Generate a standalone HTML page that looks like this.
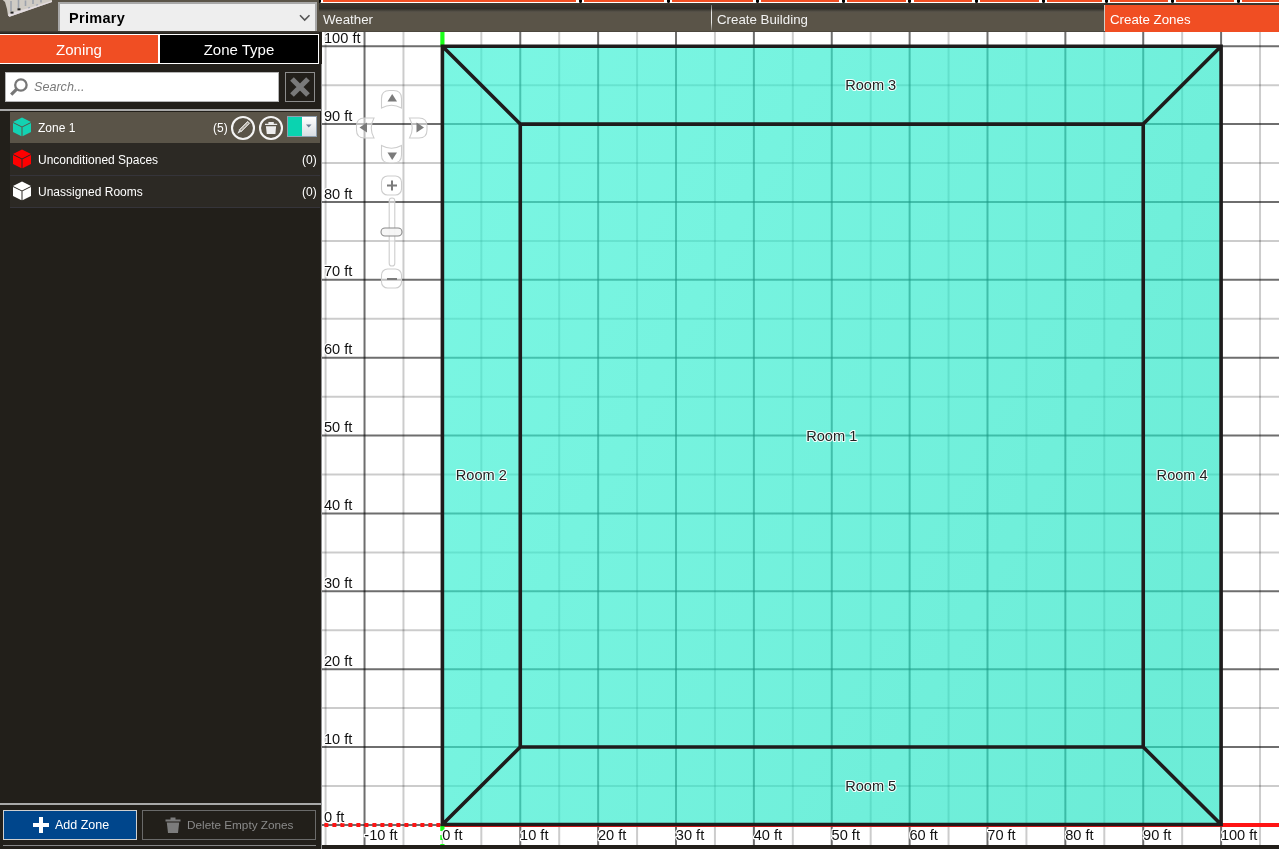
<!DOCTYPE html>
<html><head><meta charset="utf-8"><style>
*{margin:0;padding:0;box-sizing:border-box}
html,body{width:1279px;height:849px;overflow:hidden;background:#221f1a;font-family:"Liberation Sans", sans-serif}
.a{position:absolute}
.t{position:absolute;white-space:nowrap;line-height:1;will-change:transform}
svg{will-change:transform}
</style></head><body>
<!-- left header -->
<div class="a" style="left:0;top:0;width:319px;height:31px;background:#5a5448"></div>
<svg class="a" style="left:0;top:0" width="56" height="20" viewBox="0 0 56 20">
<polygon points="2.8,0 52,0 52,2 9.5,16.8 8,15.5 7,9 5,2" fill="#cfcbc4"/>
<polygon points="9.5,16.8 52,2 52,0.8 34,6.5 20,10.5 9,13.8 8,15.5" fill="#e4dde0"/>
<path d="M11 1V11 M18.5 0V8 M25.5 0.5V6 M33 0V4 M41 0V2.5" stroke="#8d96a4" stroke-width="1.6" opacity="0.75"/>
<rect x="10.5" y="11.6" width="3" height="2" fill="#222"/><rect x="17.5" y="8.3" width="3" height="2" fill="#222"/>
<path d="M28 8 L30 7.4 M36 5.2 L38 4.6" stroke="#a0a8b4" stroke-width="1.2"/>
</svg>
<div class="a" style="left:58px;top:2px;width:259px;height:29px;border:2px solid #a8a8a8;border-bottom:none;background:#eeeeee"></div>
<div class="t" style="left:69px;top:11px;font-size:14.5px;font-weight:bold;color:#000;letter-spacing:0.3px">Primary</div>
<svg class="a" style="left:298px;top:13px" width="14" height="10" viewBox="0 0 14 10"><path d="M2 2.3 L6.7 7 L11.5 2.3" stroke="#555" stroke-width="1.6" fill="none"/></svg>
<div class="a" style="left:0;top:31px;width:319px;height:3px;background:linear-gradient(#46423a,#221f1a)"></div>
<!-- tabs -->
<div class="a" style="left:0;top:34px;width:319px;height:30px;background:#fff"></div>
<div class="a" style="left:0;top:35px;width:158px;height:28px;background:#f04e23"></div>
<div class="a" style="left:160px;top:35px;width:158px;height:28px;background:#000"></div>
<div class="t" style="left:0;width:158px;text-align:center;top:42px;font-size:15px;color:#fff">Zoning</div>
<div class="t" style="left:160px;width:158px;text-align:center;top:42px;font-size:15px;color:#fff">Zone Type</div>
<!-- search -->
<div class="a" style="left:5px;top:72px;width:274px;height:30px;background:#fff;border:1px solid #b4b4b4"></div>
<svg class="a" style="left:9px;top:77px" width="21" height="20" viewBox="0 0 21 20"><circle cx="11.9" cy="8" r="5.7" stroke="#777" stroke-width="2.3" fill="none"/><path d="M8.2 11.6 L2.2 17.6" stroke="#777" stroke-width="3.2" stroke-linecap="butt"/></svg>
<div class="t" style="left:34px;top:81px;font-size:12.6px;font-style:italic;color:#7a7a7a">Search...</div>
<div class="a" style="left:285px;top:72px;width:30px;height:30px;border:1px solid #8c8c8c;background:#221f1a"></div>
<svg class="a" style="left:285px;top:72px" width="30" height="30" viewBox="0 0 30 30"><path d="M7 7 L23 23 M23 7 L7 23" stroke="#7a7a7a" stroke-width="5.2"/></svg>
<div class="a" style="left:0;top:109px;width:321px;height:2px;background:#a9a9a9"></div>
<div class="a" style="left:321px;top:64px;width:1px;height:785px;background:#8f8f8f"></div>
<!-- rows -->
<div class="a" style="left:10px;top:112px;width:310px;height:31px;background:#5a5448"></div>
<div class="a" style="left:10px;top:143px;width:310px;height:32px;background:#2c2924"></div>
<div class="a" style="left:10px;top:175px;width:310px;height:1px;background:#35343a"></div>
<div class="a" style="left:10px;top:176px;width:310px;height:31px;background:#2c2924"></div>
<div class="a" style="left:10px;top:207px;width:310px;height:1px;background:#35343a"></div>
<svg style="position:absolute;left:13px;top:117px" width="19" height="20" viewBox="0 0 19 20"><polygon points="9,0.6 18,5 9,9.4 0,5" fill="#13d2b2"/><polygon points="0,5.9 8.5,10.2 8.5,19.3 0,14.9" fill="#13d2b2"/><polygon points="9.5,10.2 18,5.9 18,14.9 9.5,19.3" fill="#13d2b2"/></svg>
<svg style="position:absolute;left:13px;top:149px" width="19" height="20" viewBox="0 0 19 20"><polygon points="9,0.6 18,5 9,9.4 0,5" fill="#ff0000"/><polygon points="0,5.9 8.5,10.2 8.5,19.3 0,14.9" fill="#ff0000"/><polygon points="9.5,10.2 18,5.9 18,14.9 9.5,19.3" fill="#ff0000"/></svg>
<svg style="position:absolute;left:13px;top:181px" width="19" height="20" viewBox="0 0 19 20"><polygon points="9,0.6 18,5 9,9.4 0,5" fill="#ffffff"/><polygon points="0,5.9 8.5,10.2 8.5,19.3 0,14.9" fill="#ffffff"/><polygon points="9.5,10.2 18,5.9 18,14.9 9.5,19.3" fill="#ffffff"/></svg>
<div class="t" style="left:38px;top:122px;font-size:12px;color:#fff">Zone 1</div>
<div class="t" style="left:38px;top:154px;font-size:12px;color:#fff">Unconditioned Spaces</div>
<div class="t" style="left:38px;top:186px;font-size:12px;color:#fff">Unassigned Rooms</div>
<div class="t" style="left:213px;top:122px;font-size:12px;color:#fff">(5)</div>
<div class="t" style="left:302px;top:154px;font-size:12px;color:#fff">(0)</div>
<div class="t" style="left:302px;top:186px;font-size:12px;color:#fff">(0)</div>
<svg class="a" style="left:230px;top:115px" width="56" height="27" viewBox="0 0 56 27">
<circle cx="13" cy="13" r="11" stroke="#f4f4f4" stroke-width="2.1" fill="none"/>
<g transform="rotate(-45 13 13)"><rect x="9" y="11.6" width="12" height="2.8" fill="#c8c4bc" stroke="#f0f0f0" stroke-width="0.7"/><path d="M9 11.6 L5 13 L9 14.4Z" fill="#e0e0e0"/><path d="M10.5 13H19.5" stroke="#6a655c" stroke-width="0.8" stroke-dasharray="1 1"/></g>
<circle cx="41" cy="13" r="11" stroke="#f4f4f4" stroke-width="2.1" fill="none"/>
<path d="M35 8.8 H47.2 V10 H35Z M38.4 7 H43.8 V8.8 H38.4Z M35.9 11.2 H46.1 L45.4 19.1 H36.8Z" fill="#ececec"/>
</svg>
<div class="a" style="left:287px;top:116px;width:30px;height:21px;border:1px solid #8fa0b0;background:linear-gradient(90deg,#0ad3b0 0,#0ad3b0 14px,#fff 14px)"></div>
<div class="a" style="left:302px;top:117px;width:14px;height:19px;background:linear-gradient(#fff,#d8dde2)"></div>
<svg class="a" style="left:304px;top:123px" width="10" height="6" viewBox="0 0 10 6"><path d="M2 1.5 H7.5 L4.75 4.6Z" fill="#6a7c94"/></svg>
<!-- bottom buttons -->
<div class="a" style="left:0;top:803px;width:321px;height:2px;background:#a9a9a9"></div>
<div class="a" style="left:3px;top:810px;width:134px;height:30px;border:1px solid #cfcfcf;background:#00468c"></div>
<svg class="a" style="left:33px;top:817px" width="16" height="16" viewBox="0 0 16 16"><path d="M6 0H10V6H16V10H10V16H6V10H0V6H6Z" fill="#fff"/></svg>
<div class="t" style="left:55px;top:819px;font-size:12.5px;color:#fff">Add Zone</div>
<div class="a" style="left:142px;top:810px;width:174px;height:30px;border:1px solid #6a6a6a"></div>
<svg class="a" style="left:164px;top:816px" width="18" height="18" viewBox="0 0 18 18"><path d="M1.5 3.5H16.5V5.5H1.5Z M6.5 1.5H11.5V3.5H6.5Z M2.8 6.5H15.2L14 17H4Z" fill="#7c7c7c"/></svg>
<div class="t" style="left:187px;top:819px;font-size:11.75px;color:#8a8a8a">Delete Empty Zones</div>
<div class="a" style="left:3px;top:845px;width:313px;height:1px;background:#858585"></div>
<!-- top bar -->
<div class="a" style="left:319px;top:3px;width:960px;height:29px;background:linear-gradient(#3e3b34 0,#35322c 2px,#302d28 5.5px,#3c3932 6.8px,#4e4a41 8px,#58534a 9px,#5a5448 10px,#5a5448 27.5px,#4c473e 28.5px)"></div>
<div style="position:absolute;left:319px;top:0;width:960px;height:2px;background:#f04e23"></div><div style="position:absolute;left:319px;top:2px;width:960px;height:1px;background:#fff"></div><div style="position:absolute;left:319px;top:0;width:4px;height:2px;background:#fff"></div><div style="position:absolute;left:318.75px;top:0;width:2.25px;height:2.5px;background:#000;border-radius:0 0 1.5px 0"></div><div style="position:absolute;left:576.0px;top:0;width:8px;height:2px;background:#fff"></div><div style="position:absolute;left:578.5px;top:0;width:3px;height:2.5px;background:#000;border-radius:0 0 1.5px 1.5px"></div><div style="position:absolute;left:664.0px;top:0;width:8px;height:2px;background:#fff"></div><div style="position:absolute;left:666.5px;top:0;width:3px;height:2.5px;background:#000;border-radius:0 0 1.5px 1.5px"></div><div style="position:absolute;left:753.0px;top:0;width:8px;height:2px;background:#fff"></div><div style="position:absolute;left:755.5px;top:0;width:3px;height:2.5px;background:#000;border-radius:0 0 1.5px 1.5px"></div><div style="position:absolute;left:839.0px;top:0;width:8px;height:2px;background:#fff"></div><div style="position:absolute;left:841.5px;top:0;width:3px;height:2.5px;background:#000;border-radius:0 0 1.5px 1.5px"></div><div style="position:absolute;left:905.5px;top:0;width:8px;height:2px;background:#fff"></div><div style="position:absolute;left:908.0px;top:0;width:3px;height:2.5px;background:#000;border-radius:0 0 1.5px 1.5px"></div><div style="position:absolute;left:972.0px;top:0;width:8px;height:2px;background:#fff"></div><div style="position:absolute;left:974.5px;top:0;width:3px;height:2.5px;background:#000;border-radius:0 0 1.5px 1.5px"></div><div style="position:absolute;left:1039.0px;top:0;width:8px;height:2px;background:#fff"></div><div style="position:absolute;left:1041.5px;top:0;width:3px;height:2.5px;background:#000;border-radius:0 0 1.5px 1.5px"></div><div style="position:absolute;left:1102.0px;top:0;width:8px;height:2px;background:#fff"></div><div style="position:absolute;left:1104.5px;top:0;width:3px;height:2.5px;background:#000;border-radius:0 0 1.5px 1.5px"></div><div style="position:absolute;left:1168.0px;top:0;width:8px;height:2px;background:#fff"></div><div style="position:absolute;left:1170.5px;top:0;width:3px;height:2.5px;background:#000;border-radius:0 0 1.5px 1.5px"></div><div style="position:absolute;left:1234.0px;top:0;width:8px;height:2px;background:#fff"></div><div style="position:absolute;left:1236.5px;top:0;width:3px;height:2.5px;background:#000;border-radius:0 0 1.5px 1.5px"></div>
<div class="a" style="left:1105px;top:5px;width:174px;height:27px;background:#f04e23"></div>
<div class="a" style="left:711px;top:5px;width:1px;height:25px;background:linear-gradient(rgba(255,255,255,0.3),rgba(255,255,255,0.85) 30%,rgba(255,255,255,0.85) 70%,rgba(255,255,255,0.2))"></div>
<div class="a" style="left:1104px;top:5px;width:1px;height:26px;background:#d0ccc4"></div>
<div class="t" style="left:323px;top:12.5px;font-size:13.3px;color:#f2f2f2">Weather</div>
<div class="t" style="left:717px;top:12.5px;font-size:13.3px;color:#f2f2f2">Create Building</div>
<div class="t" style="left:1110px;top:12.5px;font-size:13.3px;color:#fff">Create Zones</div>
<!-- map -->
<svg style="position:absolute;left:322px;top:32px" width="957" height="813" viewBox="322 32 957 813"><rect x="322" y="32" width="957" height="813" fill="#ffffff"/><path d="M325.59 32V845 M403.46 32V845 M481.33 32V845 M559.20 32V845 M637.08 32V845 M714.94 32V845 M792.82 32V845 M870.68 32V845 M948.55 32V845 M1026.42 32V845 M1104.30 32V845 M1182.16 32V845 M1260.03 32V845" stroke="#000" stroke-opacity="0.2" stroke-width="2" fill="none"/><path d="M322 785.98H1279 M322 708.12H1279 M322 630.24H1279 M322 552.38H1279 M322 474.50H1279 M322 396.63H1279 M322 318.76H1279 M322 240.89H1279 M322 163.02H1279 M322 85.15H1279" stroke="#000" stroke-opacity="0.2" stroke-width="2" fill="none"/><path d="M364.53 32V845 M520.27 32V845 M598.14 32V845 M676.01 32V845 M753.88 32V845 M831.75 32V845 M909.62 32V845 M987.49 32V845 M1065.36 32V845 M1143.23 32V845 M1221.10 32V845" stroke="#000" stroke-opacity="0.57" stroke-width="2" fill="none"/><path d="M322 824.92H1279 M322 747.05H1279 M322 669.18H1279 M322 591.31H1279 M322 513.44H1279 M322 435.57H1279 M322 357.70H1279 M322 279.83H1279 M322 201.96H1279 M322 124.09H1279 M322 46.22H1279" stroke="#000" stroke-opacity="0.57" stroke-width="2" fill="none"/><path d="M442.40 824.92V845" stroke="#c8c8c8" stroke-width="1.4"/><path d="M442.40 824.92H1279" stroke="#ff1414" stroke-width="4"/><path d="M442.40 824.92H322" stroke="#ff1414" stroke-width="4" stroke-dasharray="4 4" stroke-dashoffset="6"/><path d="M442.40 46.22V32" stroke="#19ff19" stroke-width="4.2"/><path d="M442.40 825.92V845" stroke="#19ff19" stroke-width="4.2" stroke-dasharray="5 4"/><defs><linearGradient id="tg" gradientUnits="userSpaceOnUse" x1="442" y1="200" x2="1221" y2="600"><stop offset="0" stop-color="#33f1d3"/><stop offset="1" stop-color="#1ee3c2"/></linearGradient></defs><polygon points="520.27,747.05 1143.23,747.05 1143.23,124.09 520.27,124.09" fill="url(#tg)" fill-opacity="0.65"/><polygon points="442.40,824.92 520.27,747.05 520.27,124.09 442.40,46.22" fill="url(#tg)" fill-opacity="0.65"/><polygon points="442.40,46.22 520.27,124.09 1143.23,124.09 1221.10,46.22" fill="url(#tg)" fill-opacity="0.65"/><polygon points="1221.10,46.22 1143.23,124.09 1143.23,747.05 1221.10,824.92" fill="url(#tg)" fill-opacity="0.65"/><polygon points="442.40,824.92 1221.10,824.92 1143.23,747.05 520.27,747.05" fill="url(#tg)" fill-opacity="0.65"/><path d="M442.40 824.52H1221.10V46.22H442.40Z M520.27 747.05H1143.23V124.09H520.27Z M442.40 824.52L520.27 747.05 M1221.10 824.52L1143.23 747.05 M442.40 46.22L520.27 124.09 M1221.10 46.22L1143.23 124.09" stroke="#1e1c1c" stroke-width="3.6" fill="none" stroke-linejoin="miter"/><g font-family='"Liberation Sans", sans-serif' font-size="14.6" fill="#111" stroke="#fff" stroke-width="2.4" stroke-linejoin="round" paint-order="stroke"><text x="324" y="821.52">0 ft</text><text x="324" y="743.65">10 ft</text><text x="324" y="665.78">20 ft</text><text x="324" y="587.91">30 ft</text><text x="324" y="510.04">40 ft</text><text x="324" y="432.17">50 ft</text><text x="324" y="354.30">60 ft</text><text x="324" y="276.43">70 ft</text><text x="324" y="198.56">80 ft</text><text x="324" y="120.69">90 ft</text><text x="324" y="42.82">100 ft</text><text x="364.33" y="840.4">-10 ft</text><text x="442.20" y="840.4">0 ft</text><text x="520.07" y="840.4">10 ft</text><text x="597.94" y="840.4">20 ft</text><text x="675.81" y="840.4">30 ft</text><text x="753.68" y="840.4">40 ft</text><text x="831.55" y="840.4">50 ft</text><text x="909.42" y="840.4">60 ft</text><text x="987.29" y="840.4">70 ft</text><text x="1065.16" y="840.4">80 ft</text><text x="1143.03" y="840.4">90 ft</text><text x="1220.90" y="840.4">100 ft</text></g><g font-family='"Liberation Sans", sans-serif' font-size="14.6" fill="#222" stroke="#ffffff" stroke-width="2.2" stroke-linejoin="round" paint-order="stroke" stroke-opacity="0.9"><text x="831.75" y="440.57" text-anchor="middle">Room 1</text><text x="481.33" y="479.50" text-anchor="middle">Room 2</text><text x="870.68" y="90.15" text-anchor="middle">Room 3</text><text x="1182.16" y="479.50" text-anchor="middle">Room 4</text><text x="870.68" y="790.98" text-anchor="middle">Room 5</text></g>
<g fill="rgba(255,255,255,0.55)" stroke="#cdcdcd" stroke-width="1.1">
<path d="M381.5 108 V98.5 Q381.5 90.5 389.5 90.5 H393.5 Q401.5 90.5 401.5 98.5 V108 Q391.5 102.5 381.5 108 Z"/>
<path d="M381.5 145.5 Q391.5 151 401.5 145.5 V155 Q401.5 163 393.5 163 H389.5 Q381.5 163 381.5 155 Z"/>
<path d="M374 118 Q368.5 128 374 138 H364.5 Q356.5 138 356.5 130 V126 Q356.5 118 364.5 118 Z"/>
<path d="M409.5 118 H419 Q427 118 427 126 V130 Q427 138 419 138 H409.5 Q415 128 409.5 118 Z"/>
<rect x="381.5" y="176" width="20" height="19" rx="6"/>
<rect x="381.5" y="269" width="20" height="19" rx="6"/>
<rect x="389.2" y="198" width="5.6" height="68" rx="2.8"/>
<rect x="381" y="228" width="21" height="8" rx="4" fill="rgba(245,245,245,0.9)" stroke="#8a8a8a"/>
</g>
<g fill="#7b7b7b">
<path d="M387.5 101.5 L392.2 94 L397 101.5Z"/>
<path d="M387.5 152.5 L392.2 160 L397 152.5Z"/>
<path d="M367 122.5 L359.5 127.5 L367 132.5Z"/>
<path d="M416.5 122.5 L424 127.5 L416.5 132.5Z"/>
<rect x="387" y="184.5" width="10" height="2"/><rect x="391" y="180.5" width="2" height="10"/>
<rect x="387" y="278" width="10" height="2"/>
</g>
</svg>
<div class="a" style="left:322px;top:845px;width:957px;height:4px;background:#221f1a"></div>
</body></html>
